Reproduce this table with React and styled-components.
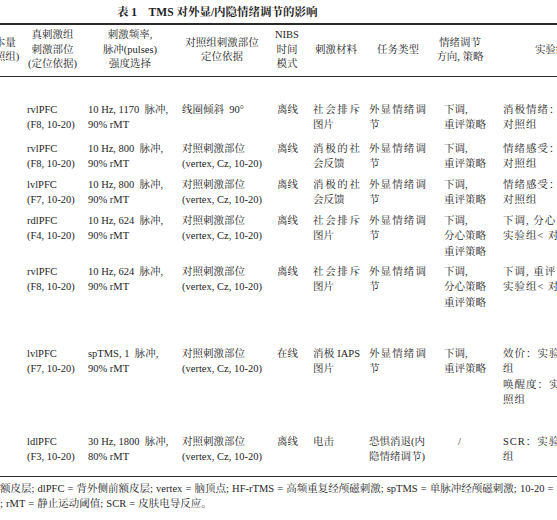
import React from 'react';
import styled, { createGlobalStyle } from 'styled-components';

const GlobalStyle = createGlobalStyle`
  html, body {
    margin: 0;
    padding: 0;
    background: #ffffff;
  }
`;

const Page = styled.div`
  width: 557px;
  height: 520px;
  overflow: hidden;
  background: #ffffff;
  color: #1e1e1e;
  font-family: 'Liberation Serif', 'Noto Serif CJK SC', 'Noto Sans CJK SC', serif;
  font-size: 10.5px;
`;

const Title = styled.div`
  padding: 4px 0 0 117px;
  height: 16px;
  line-height: 16px;
  margin-bottom: 3px;
  font-size: 11.5px;
  font-weight: bold;
  white-space: nowrap;
`;

const Sheet = styled.div`
  margin-left: -26px;
  width: 720px;
`;

const Rule = styled.div`
  height: ${(p) => p.$size}px;
  background: #2a2a2a;
`;

const HeaderRow = styled.div`
  display: grid;
  grid-template-columns: 52px 53px 102px 82px 48px 50px 74px 50px 142px;
  height: 51px;
  align-items: center;
  text-align: center;
  line-height: 14.5px;
  white-space: nowrap;
`;

const Body = styled.div`
  padding-top: 25px;
`;

const BodyRow = styled.div`
  display: grid;
  grid-template-columns: 53px 61px 94px 95px 36px 56px 75px 59px 130px;
  height: ${(p) => p.$h}px;
  align-items: start;
  line-height: 15.5px;
  white-space: nowrap;
`;

const Cell = styled.div`
  letter-spacing: ${(p) => (p.$loose ? '1px' : '0')};
`;

const Line = styled.div`
  padding-left: ${(p) => p.$pad || 0}px;
`;

const Spread = styled.div`
  width: ${(p) => p.$w}px;
  text-align: justify;
  text-align-last: justify;
`;

const Notes = styled.div`
  padding-top: 4px;
  line-height: 15px;
  white-space: nowrap;
  word-spacing: 0.5px;
`;

const header = [
  ['样本量', '(对照组)'],
  ['真刺激组', '刺激部位', '(定位依据)'],
  ['刺激频率,', '脉冲(pulses)', '强度选择'],
  ['对照组刺激部位', '定位依据'],
  ['NIBS', '时间', '模式'],
  ['刺激材料'],
  ['任务类型'],
  ['情绪调节', '方向, 策略'],
  ['实验结果'],
];

const sham = ['对照刺激部位', '(vertex, Cz, 10-20)'];

const rows = [
  {
    h: 39,
    site: ['rvlPFC', '(F8, 10-20)'],
    dose: ['10 Hz, 1170\u00a0 脉冲,', '90% rMT'],
    sham: ['线圈倾斜\u00a0 90°'],
    mode: '离线',
    material: [['社会排斥', true], ['图片']],
    task: [['外显情绪调', true], ['节']],
    strategy: ['下调,', '重评策略'],
    result: ['消极情绪：实验组 < 对照组', '对照组'],
  },
  {
    h: 36,
    site: ['rvlPFC', '(F8, 10-20)'],
    dose: ['10 Hz, 800\u00a0 脉冲,', '90% rMT'],
    sham,
    mode: '离线',
    material: [['消极的社', true], ['会反馈']],
    task: [['外显情绪调', true], ['节']],
    strategy: ['下调,', '重评策略'],
    result: ['情绪感受：实验组 <', '对照组'],
  },
  {
    h: 36,
    site: ['lvlPFC', '(F7, 10-20)'],
    dose: ['10 Hz, 800\u00a0 脉冲,', '90% rMT'],
    sham,
    mode: '离线',
    material: [['消极的社', true], ['会反馈']],
    task: [['外显情绪调', true], ['节']],
    strategy: ['下调,', '重评策略'],
    result: ['情绪感受：实验组 >', '对照组'],
  },
  {
    h: 51,
    site: ['rdlPFC', '(F4, 10-20)'],
    dose: ['10 Hz, 624\u00a0 脉冲,', '90% rMT'],
    sham,
    mode: '离线',
    material: [['社会排斥', true], ['图片']],
    task: [['外显情绪调', true], ['节']],
    strategy: ['下调,', '分心策略', '重评策略'],
    result: ['下调, 分心策略：', '实验组< 对照组'],
  },
  {
    h: 82,
    site: ['rvlPFC', '(F8, 10-20)'],
    dose: ['10 Hz, 624\u00a0 脉冲,', '90% rMT'],
    sham,
    mode: '离线',
    material: [['社会排斥', true], ['图片']],
    task: [['外显情绪调', true], ['节']],
    strategy: ['下调,', '分心策略', '重评策略'],
    result: ['下调, 重评策略：', '实验组< 对照组'],
  },
  {
    h: 88,
    site: ['lvlPFC', '(F7, 10-20)'],
    dose: ['spTMS, 1\u00a0 脉冲,', '90% rMT'],
    sham,
    mode: '在线',
    material: [['消极 IAPS', true], ['图片']],
    task: [['外显情绪调', true], ['节']],
    strategy: ['下调,', '重评策略'],
    result: ['效价：实验组 = 对照', '组', '唤醒度：实验组 < 对', '照组'],
  },
  {
    h: 42,
    site: ['ldlPFC', '(F3, 10-20)'],
    dose: ['30 Hz, 1800\u00a0 脉冲,', '80% rMT'],
    sham,
    mode: '离线',
    material: [['电击']],
    task: [['恐惧消退(内'], ['隐情绪调节)']],
    strategy: [],
    slash: true,
    result: ['SCR：实验组 < 对照', '组'],
  },
];

const Lines = ({ items }) => items.map((t, i) => <Line key={i}>{t}</Line>);

const SpreadLines = ({ items, w }) =>
  items.map(([t, spread], i) =>
    spread ? (
      <Spread key={i} $w={w}>
        {t}
      </Spread>
    ) : (
      <Line key={i}>{t}</Line>
    ),
  );

const App = () => {
  return (
    <Page>
      <GlobalStyle />
      <Title>表 1&nbsp;&nbsp;&nbsp; TMS 对外显/内隐情绪调节的影响</Title>
      <Sheet>
        <Rule $size={1.5} />
        <HeaderRow>
          {header.map((lines, i) => (
            <div key={i}>
              <Lines items={lines} />
            </div>
          ))}
        </HeaderRow>
        <Rule $size={1} />
        <Body>
          {rows.map((r, i) => (
            <BodyRow key={i} $h={r.h}>
              <Cell />
              <Cell>
                <Lines items={r.site} />
              </Cell>
              <Cell>
                <Lines items={r.dose} />
              </Cell>
              <Cell>
                <Lines items={r.sham} />
              </Cell>
              <Cell>
                <Line>{r.mode}</Line>
              </Cell>
              <Cell>
                <SpreadLines items={r.material} w={47} />
              </Cell>
              <Cell>
                <SpreadLines items={r.task} w={57} />
              </Cell>
              <Cell>
                {r.slash ? <Line $pad={14}>/</Line> : <Lines items={r.strategy} />}
              </Cell>
              <Cell $loose>
                <Lines items={r.result} />
              </Cell>
            </BodyRow>
          ))}
        </Body>
        <Rule $size={1.5} />
      </Sheet>
      <Notes>
        <div>
          额皮层; dlPFC = 背外侧前额皮层; vertex = 脑顶点; HF-rTMS = 高频重复经颅磁刺激; spTMS = 单脉冲经颅磁刺激; 10-20 = 国际 10-20 系统
        </div>
        <div>; rMT = 静止运动阈值; SCR = 皮肤电导反应。</div>
      </Notes>
    </Page>
  );
};

export default App;
